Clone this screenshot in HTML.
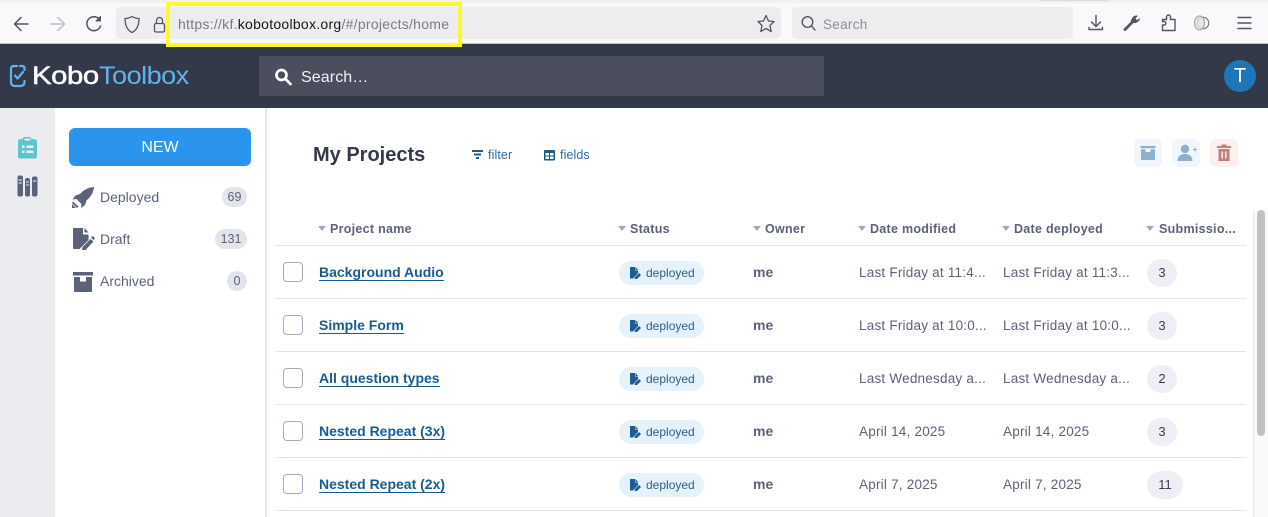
<!DOCTYPE html>
<html><head><meta charset="utf-8"><style>
*{box-sizing:border-box}
html,body{margin:0;padding:0;width:1268px;height:517px;overflow:hidden;background:#fff;font-family:"Liberation Sans",sans-serif}
.a{position:absolute;white-space:nowrap}
svg{position:absolute;overflow:visible}
.hd{font-size:12.5px;font-weight:700;color:#5c6278;top:222px;line-height:15px;letter-spacing:.28px}
.tri{position:absolute;top:226px;width:0;height:0;border-left:4px solid transparent;border-right:4px solid transparent;border-top:5px solid #a6a9b8}
.ln{position:absolute;left:275px;width:971px;height:1px;background:#e3e4ea}
.cb{position:absolute;left:283px;width:20px;height:20px;border:1px solid #a6a9bd;border-radius:4px;background:#fff}
.nm{position:absolute;left:319px;font-size:14px;font-weight:700;color:#185b91;line-height:15px;border-bottom:1px solid #185b91;letter-spacing:0;white-space:nowrap}
.pill{position:absolute;left:619px;width:85px;height:24px;border-radius:12px;background:#e5f1fb}
.pill span{position:absolute;left:27px;top:4px;font-size:12px;line-height:16px;color:#2f5f8c}
.me{position:absolute;left:753px;font-size:14px;font-weight:700;color:#5c6278;line-height:15px}
.dt{position:absolute;font-size:13.5px;color:#5c6278;line-height:15px;letter-spacing:.22px;white-space:nowrap}
.ct{position:absolute;left:1147px;height:28px;border-radius:14px;background:#eeeff4;font-size:13px;color:#3a3f51;text-align:center;line-height:28px}
.side{position:absolute;font-size:14px;color:#5c6278;line-height:16px;left:100px}
.bd{position:absolute;height:20px;border-radius:10px;background:#e3e4ec;font-size:12.5px;color:#5c6278;text-align:center;line-height:20px}
</style></head><body>

<!-- browser chrome -->
<div class="a" style="left:0;top:0;width:1268px;height:43px;background:#f9f9fb"></div>
<div class="a" style="left:0;top:0;width:1268px;height:3px;background:#f1f1f3"></div>
<div class="a" style="left:1040px;top:0;width:70px;height:1px;background:#dcdcde"></div>
<div class="a" style="left:0;top:43px;width:1268px;height:1px;background:#c9c9cc"></div>
<svg style="left:0;top:0" width="120" height="44" fill="none" stroke-linecap="round" stroke-linejoin="round">
<path d="M28 24H15M21 17.500L14.500 24L21 30.500" stroke="#55555e" stroke-width="1.500"/>
<path d="M51 24H64M58 17.500L64.500 24L58 30.500" stroke="#bcbcc2" stroke-width="1.500"/>
<path d="M99.500 19.500A7 7 0 1 0 100.500 26" stroke="#55555e" stroke-width="1.500"/>
<path d="M100.500 16.500V21H96Z" fill="#55555e" stroke="#55555e"/>
</svg>
<div class="a" style="left:116px;top:7px;width:665px;height:32px;border-radius:5px;background:#ededf0"></div>
<svg style="left:120px;top:10px" width="50" height="30" fill="none" stroke="#55555e" stroke-width="1.300" stroke-linejoin="round">
<path d="M12 6.500C9.500 8 7 8.500 5 8.500C5 15 7 20 12 22.500C17 20 19 15 19 8.500C17 8.500 14.500 8 12 6.500Z"/>
<rect x="34.500" y="13.500" width="10" height="8.500" rx="1.500"/><path d="M36.500 13.500V10.500A3 3 0 0 1 42.500 10.500V13.500"/>
</svg>
<div class="a" style="left:178px;top:16px;font-size:14px;line-height:17px;color:#7b7b80;letter-spacing:.27px">https://kf.<span style="color:#17171a">kobotoolbox.org</span>/#/projects/home</div>
<div class="a" style="left:166px;top:2px;width:296px;height:45px;border:4px solid #fff830;z-index:5"></div>
<svg style="left:756px;top:14px" width="20" height="20" fill="none" stroke="#55555e" stroke-width="1.300" stroke-linejoin="round"><path d="M10 1.500L12.500 7L18 7.500L14 11.500L15.200 17.500L10 14.500L4.800 17.500L6 11.500L2 7.500L7.500 7Z"/></svg>
<div class="a" style="left:792px;top:7px;width:281px;height:32px;border-radius:5px;background:#ededf0"></div>
<svg style="left:800px;top:15px" width="18" height="18" fill="none" stroke="#55555e" stroke-width="1.400" stroke-linecap="round"><circle cx="7.500" cy="7" r="5.300"/><path d="M11.500 11L15 15"/></svg>
<div class="a" style="left:823px;top:16px;font-size:13.500px;line-height:17px;color:#8e8e93;letter-spacing:.3px">Search</div>
<svg style="left:1085px;top:12px" width="170" height="24" fill="none" stroke="#55555e" stroke-width="1.400" stroke-linecap="round" stroke-linejoin="round">
<path d="M11 3.500V14M6.500 10L11 14.500L15.500 10M4 15.500V17.500H17.500V15.500"/>
<path d="M40 17.500L47 10.500" stroke-width="2.800"/>
<path d="M47 6.500C48 4 51 3 53 3.800L50.500 6.500L52 8.200L54.800 6C55 9 52 11.500 48.500 11L45.500 9Z" fill="#55555e" stroke="none"/>
<path d="M77.500 18.500V13H79.500A1.800 1.800 0 0 0 79.500 9.500H77.500V7.500H81.500V5A2 2 0 0 1 85.500 5V7.500H90V18.500Z"/>
<circle cx="118" cy="11" r="5.800" stroke="#77777c" stroke-width="1.100" fill="#f4f4f5"/>
<ellipse cx="114.500" cy="11" rx="5" ry="7" stroke="#a9a9ad" stroke-width="1.200" fill="#e2e2e4" fill-opacity=".8"/>
<path d="M153 5.500H166M153 11H166M153 16.500H166"/>
</svg>

<!-- header -->
<div class="a" style="left:0;top:44px;width:1268px;height:64px;background:#333948"></div>
<svg style="left:9px;top:64px" width="20" height="24" fill="none" stroke="#5eb3ee" stroke-width="2.200" stroke-linecap="round" stroke-linejoin="round">
<path d="M8 2H5Q2 2 2 5V18Q2 22 6 22H11Q15.500 22 15.500 18V17M11 2H13Q15.500 2 15.500 4.500V6"/><path d="M6 11.500L8.500 14.500L14 8"/>
</svg>
<div class="a" style="left:32px;top:62px;font-size:25px;line-height:29px;color:#fff;letter-spacing:-.35px;transform:scaleX(1.17);transform-origin:0 50%;-webkit-text-stroke:.5px #fff">Kobo</div>
<div class="a" style="left:99px;top:62px;font-size:25px;line-height:29px;color:#5eb3ee;letter-spacing:-.5px;transform:scaleX(1.085);transform-origin:0 50%">Toolbox</div>
<div class="a" style="left:259px;top:56px;width:565px;height:40px;background:#4a4e5d"></div>
<svg style="left:274px;top:68px" width="20" height="20" fill="none" stroke="#fff" stroke-width="2.700" stroke-linecap="round"><circle cx="7.500" cy="7" r="5"/><path d="M11.500 11L16.500 16"/></svg>
<div class="a" style="left:301px;top:68px;font-size:16px;line-height:19px;color:#f2f2f4;letter-spacing:.1px">Search…</div>
<div class="a" style="left:1224px;top:60px;width:32px;height:32px;border-radius:50%;background:#1d75ba;color:#fff;font-size:20px;line-height:32px;text-align:center">T</div>

<!-- left rail -->
<div class="a" style="left:0;top:108px;width:55px;height:409px;background:#ebecf0"></div>
<svg style="left:16px;top:136px" width="24" height="24">
<path d="M5 3H7V2Q7 1 8 1H14Q15 1 15 2V3H18Q21 3 21 6V20Q21 22.500 19 22.500H4Q2 22.500 2 20V6Q2 3 5 3Z" fill="#5cc6ca"/>
<rect x="8.500" y="2.500" width="6" height="2" fill="#ebecf0"/>
<rect x="6" y="9.500" width="2.500" height="2.500" fill="#ebecf0"/><rect x="10.500" y="9.500" width="7" height="2.500" fill="#ebecf0"/>
<rect x="6" y="14.500" width="2.500" height="2.500" fill="#ebecf0"/><rect x="10.500" y="14.500" width="7" height="2.500" fill="#ebecf0"/>
</svg>
<svg style="left:16px;top:144px" width="24" height="54">
<rect x="1.500" y="31.500" width="5.500" height="21" rx="2" fill="#5c6278"/><rect x="9" y="34" width="5" height="18.500" rx="2" fill="#5c6278"/><rect x="16" y="32.500" width="5.500" height="20" rx="2" fill="#5c6278"/>
<path d="M2.500 36H6M2.500 39H6M10 38H13M10 41H13M17 37H20.500" stroke="#ebecf0" stroke-width="1"/>
</svg>

<!-- sidebar -->
<div class="a" style="left:265px;top:108px;width:2px;height:409px;background:#e8e8ec"></div>
<div class="a" style="left:267px;top:108px;width:3px;height:409px;background:#fafafb"></div>
<div class="a" style="left:69px;top:128px;width:182px;height:38px;border-radius:6px;background:#2b95ee;color:#fff;font-size:16px;line-height:40px;text-align:center">NEW</div>

<svg style="left:70px;top:185px" width="26" height="26" fill="#5c6278">
<path d="M24 2C18 2.500 13.500 5 10 9L5.500 10.500L2.500 14.500L6.500 14L11.500 19L11 23L15 20L16.500 15.500C20.500 12 23.500 8 24 2Z"/>
<path d="M2 19L6 23H2Z"/><path d="M3 16.500L8.500 21.500L7 23L2 18Z"/>
</svg>
<div class="side" style="top:189px">Deployed</div>
<div class="bd" style="left:222px;top:187px;width:25px">69</div>

<svg style="left:72px;top:227px" width="24" height="26" fill="#5c6278">
<path d="M2 1H11V7.500H16.500V13L8 21.500V22H2Q1 22 1 21V2Q1 1 2 1Z"/><path d="M12.500 1L16.500 5.500H12.500Z"/>
<path d="M9.500 22.500L10 19.500L18 11.500L21 14L13 22.500Z" transform="translate(.5,.5)"/><path d="M19 10.500L20 9.500Q21 9 21.500 9.500L22.500 10.500Q23 11.500 22.500 12L21.500 13Z"/>
</svg>
<div class="side" style="top:231px">Draft</div>
<div class="bd" style="left:215px;top:229px;width:32px">131</div>

<svg style="left:73px;top:272px" width="22" height="20" fill="#5c6278">
<rect x="0" y="0" width="20" height="3.500"/><path d="M1 5H7V9.500H13V5H19V19Q19 20 18 20H2Q1 20 1 19Z"/>
</svg>
<div class="side" style="top:273px">Archived</div>
<div class="bd" style="left:227px;top:271px;width:20px">0</div>

<!-- toolbar -->
<div class="a" style="left:313px;top:143px;font-size:20px;font-weight:700;line-height:24px;color:#333948">My Projects</div>
<svg style="left:472px;top:150px" width="12" height="11" fill="#185b91"><rect x="0" y="0" width="11" height="2"/><rect x="2" y="3.500" width="7" height="2"/><rect x="4" y="7" width="3" height="2"/></svg>
<div class="a" style="left:488px;top:148px;font-size:12.500px;line-height:15px;color:#2f6a9c;letter-spacing:.1px">filter</div>
<svg style="left:544px;top:150px" width="11" height="11"><rect x="0" y="0" width="11" height="10.500" rx="1" fill="#185b91"/><rect x="1.500" y="3" width="3.500" height="2.500" fill="#fff"/><rect x="6" y="3" width="3.500" height="2.500" fill="#fff"/><rect x="1.500" y="6.500" width="3.500" height="2.500" fill="#fff"/><rect x="6" y="6.500" width="3.500" height="2.500" fill="#fff"/></svg>
<div class="a" style="left:560px;top:148px;font-size:12.500px;line-height:15px;color:#2f6a9c;letter-spacing:.1px">fields</div>

<div class="a" style="left:1134px;top:139px;width:28px;height:28px;border-radius:6px;background:#f0f6fc"></div>
<div class="a" style="left:1172px;top:139px;width:28px;height:28px;border-radius:6px;background:#f0f6fc"></div>
<div class="a" style="left:1210px;top:139px;width:28px;height:28px;border-radius:6px;background:#fdf0ef"></div>
<svg style="left:1140px;top:145px" width="16" height="16" fill="#8cb0cf"><rect x="0.500" y="1" width="15" height="2.200"/><path d="M1 4.200H5.500V7H10.500V4.200H15V15H1Z"/></svg>
<svg style="left:1177px;top:144px" width="20" height="18" fill="#8cb0cf"><circle cx="8" cy="5" r="4.200"/><path d="M0.500 17C0.500 12.500 3.500 10 8 10C12.500 10 15.500 12.500 15.500 17Z"/><path d="M16 5.500H20M18 3.500V7.500" stroke="#8cb0cf" stroke-width="1.100"/></svg>
<svg style="left:1217px;top:144px" width="14" height="18" fill="#c67d7f"><rect x="0" y="2" width="14" height="2"/><rect x="4.500" y="0.500" width="5" height="2"/><path d="M1.500 5H12.500V17H1.500Z"/><rect x="4.500" y="7.500" width="1.500" height="7" fill="#fdf0ef"/><rect x="8" y="7.500" width="1.500" height="7" fill="#fdf0ef"/></svg>

<!-- table header -->
<div class="tri" style="left:318px"></div><div class="a hd" style="left:330px">Project name</div>
<div class="tri" style="left:618px"></div><div class="a hd" style="left:630px">Status</div>
<div class="tri" style="left:753px"></div><div class="a hd" style="left:765px">Owner</div>
<div class="tri" style="left:858px"></div><div class="a hd" style="left:870px">Date modified</div>
<div class="tri" style="left:1002px"></div><div class="a hd" style="left:1014px">Date deployed</div>
<div class="tri" style="left:1146px"></div><div class="a hd" style="left:1159px">Submissio...</div>

<div class="ln" style="top:245px"></div>
<div class="ln" style="top:298px"></div>
<div class="ln" style="top:351px"></div>
<div class="ln" style="top:404px"></div>
<div class="ln" style="top:457px"></div>
<div class="ln" style="top:510px"></div>

<!-- rows -->
<div class="cb" style="top:262px"></div><div class="nm" style="top:265px">Background Audio</div>
<div class="pill" style="top:261px"><svg style="left:10px;top:6px" width="13" height="13" fill="#1f5c93"><path d="M1 0H6V3.500H9V6L4 11.500H1Z"/><path d="M6.500 0L9 3H6.500Z"/><path d="M5.500 12L6 10L10 6L12 8L8 12Z"/></svg><span>deployed</span></div>
<div class="me" style="top:265px">me</div><div class="dt" style="left:859px;top:265px">Last Friday at 11:4...</div><div class="dt" style="left:1003px;top:265px">Last Friday at 11:3...</div><div class="ct" style="top:259px;width:30px">3</div>

<div class="cb" style="top:315px"></div><div class="nm" style="top:318px">Simple Form</div>
<div class="pill" style="top:314px"><svg style="left:10px;top:6px" width="13" height="13" fill="#1f5c93"><path d="M1 0H6V3.500H9V6L4 11.500H1Z"/><path d="M6.500 0L9 3H6.500Z"/><path d="M5.500 12L6 10L10 6L12 8L8 12Z"/></svg><span>deployed</span></div>
<div class="me" style="top:318px">me</div><div class="dt" style="left:859px;top:318px">Last Friday at 10:0...</div><div class="dt" style="left:1003px;top:318px">Last Friday at 10:0...</div><div class="ct" style="top:312px;width:30px">3</div>

<div class="cb" style="top:368px"></div><div class="nm" style="top:371px">All question types</div>
<div class="pill" style="top:367px"><svg style="left:10px;top:6px" width="13" height="13" fill="#1f5c93"><path d="M1 0H6V3.500H9V6L4 11.500H1Z"/><path d="M6.500 0L9 3H6.500Z"/><path d="M5.500 12L6 10L10 6L12 8L8 12Z"/></svg><span>deployed</span></div>
<div class="me" style="top:371px">me</div><div class="dt" style="left:859px;top:371px">Last Wednesday a...</div><div class="dt" style="left:1003px;top:371px">Last Wednesday a...</div><div class="ct" style="top:365px;width:30px">2</div>

<div class="cb" style="top:421px"></div><div class="nm" style="top:424px">Nested Repeat (3x)</div>
<div class="pill" style="top:420px"><svg style="left:10px;top:6px" width="13" height="13" fill="#1f5c93"><path d="M1 0H6V3.500H9V6L4 11.500H1Z"/><path d="M6.500 0L9 3H6.500Z"/><path d="M5.500 12L6 10L10 6L12 8L8 12Z"/></svg><span>deployed</span></div>
<div class="me" style="top:424px">me</div><div class="dt" style="left:859px;top:424px">April 14, 2025</div><div class="dt" style="left:1003px;top:424px">April 14, 2025</div><div class="ct" style="top:418px;width:30px">3</div>

<div class="cb" style="top:474px"></div><div class="nm" style="top:477px">Nested Repeat (2x)</div>
<div class="pill" style="top:473px"><svg style="left:10px;top:6px" width="13" height="13" fill="#1f5c93"><path d="M1 0H6V3.500H9V6L4 11.500H1Z"/><path d="M6.500 0L9 3H6.500Z"/><path d="M5.500 12L6 10L10 6L12 8L8 12Z"/></svg><span>deployed</span></div>
<div class="me" style="top:477px">me</div><div class="dt" style="left:859px;top:477px">April 7, 2025</div><div class="dt" style="left:1003px;top:477px">April 7, 2025</div><div class="ct" style="top:471px;width:36px">11</div>

<!-- scrollbar -->
<div class="a" style="left:1253px;top:210px;width:15px;height:307px;background:#fafafa;border-left:1px solid #e8e8e8"></div>
<div class="a" style="left:1257px;top:210px;width:8px;height:226px;border-radius:4px;background:#c1c1c1"></div>
</body></html>
